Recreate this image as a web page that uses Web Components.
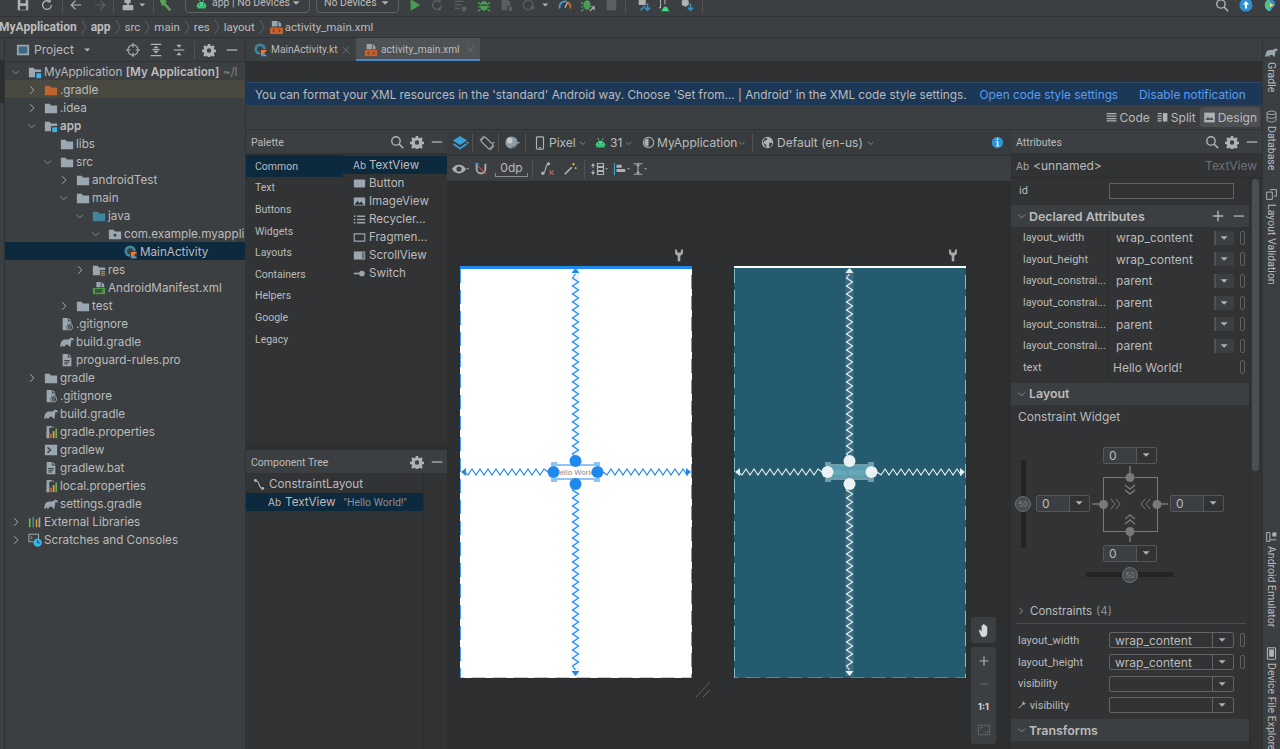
<!DOCTYPE html>
<html>
<head>
<meta charset="utf-8">
<style>
    html, body { margin: 0; padding: 0; background: #3c3f41; overflow: hidden; }
    body { font: 12px Inter, "Liberation Sans", sans-serif; color: #bbbbbb; width: 1280px; height: 749px; }
</style>
</head>
<body>
<ide-window></ide-window>
<script>
const GRAY = "#9aa7b0";
const FOLDER = (c) => `<path fill="${c}" d="M1 3h5.5L8 5h7v9H1z"/>`;
const FILE = `<path fill="${GRAY}" d="M3 1h6v4h4v10H3zM10 1l3 3h-3z"/>`;
const ELEPHANT = `<path fill="${GRAY}" d="M0 13c0-1 .6-1.6.8-3C1.200 7 3 5 6.500 5H9c2 0 2.500-2 4-2 1.500 0 2.700 1 2.700 2.300 0 .9-.8 1.200-1.500.8-.2-.6-.6-.9-1-.5-.7.6 0 3-1 4.400V13H10l-.3-2H6l-.5 2H3.200l-.2-2-1 2z"/>`;
const BARS = `<path fill="#c9642b" d="M7 10h2v5H7z"/><path fill="#e8a33d" d="M10 7h2v8h-2z"/><path fill="#62b543" d="M13 4h2v11h-2z"/>`;
const CARET = `<path fill="#afb1b3" d="M3 6h8l-4 4z"/>`;
const CHEV_DOWN = `<path fill="none" stroke="#8c8f91" stroke-width="1.300" d="M3 6l4.500 4.500L12 6"/>`;
const CHEV_RIGHT = `<path fill="none" stroke="#a7a9ab" stroke-width="1.300" d="M5.500 3l5 5-5 5"/>`;

const ICONS = {
    folder: FOLDER(GRAY),
    orange: FOLDER("#c0642f"),
    blue: FOLDER("#40859e"),
    module: FOLDER(GRAY) + `<path fill="#3c3f41" d="M8 8h8v8H8z"/><path fill="#3bb5ec" d="M9.500 9.500H15V15H9.500z"/>`,
    res: FOLDER(GRAY) + `<path fill="#3c3f41" d="M9 8h7v8H9z"/><path fill="#a5834a" d="M10 9h5v1.500h-5zM10 11h5v1.500h-5zM10 13h5v1.500h-5z"/>`,
    pkg: FOLDER(GRAY) + `<circle cx="8" cy="9.500" r="1.700" fill="#3c3f41"/>`,
    kotlin: `<circle cx="7" cy="7" r="6.500" fill="#40859e"/><circle cx="7" cy="7" r="3.400" fill="#3c3f41"/><path fill="#3c3f41" d="M7 7h8v9H7z"/><path fill="#f0772b" d="M8 8h7l-7 7z"/><path fill="#3aa0e8" d="M15 8v0L8 15h7l-3.500-3.500z"/>`,
    file: FILE + `<path fill="#3c3f41" d="M5 8h6v1H5zM5 10h6v1H5zM5 12h4v1H5z"/>`,
    git: FILE + `<circle cx="11.500" cy="11.500" r="4" fill="#3c3f41"/><circle cx="11.500" cy="11.500" r="3" fill="none" stroke="${GRAY}"/><path stroke="${GRAY}" d="M9.500 13.500l4-4"/>`,
    gradle: ELEPHANT,
    props: FILE + `<path fill="#3c3f41" d="M6 3h10v13H6z"/>` + BARS + `<path fill="${GRAY}" d="M3 8h3v7H3z"/>`,
    term: `<path fill="${GRAY}" d="M1 2h14v12H1z"/><path fill="none" stroke="#3c3f41" stroke-width="1.600" d="M4 5l3.500 3L4 11"/>`,
    xml: `<path fill="${GRAY}" d="M3 1h6v6H3zM10 1l3 3v3h-3z"/><path fill="#c9602b" d="M1 8h14v7H1z"/><path fill="none" stroke="#3c3f41" d="M6 10l-2 1.500L6 13M10 10l2 1.500-2 1.500"/>`,
    manifest: `<path fill="${GRAY}" d="M5 1h5v6H5zM11 1l3 3v3h-3z"/><path fill="#4f9b4a" d="M1 8h14v7H1z"/><text x="8" y="14" font-size="6" font-weight="700" text-anchor="middle" fill="#2b2b2b" font-family="Inter">MF</text>`,
    libs: `<path fill="#62b543" d="M1 4h2v10H1z"/><path fill="#40859e" d="M5 2h2v12H5z"/><path fill="#e8a33d" d="M9 5h1.500v9H9z"/><path fill="${GRAY}" d="M12 3h2v11h-2z"/>`,
    scratch: `<path fill="none" stroke="${GRAY}" stroke-width="1.200" d="M1 1.500h11V8M1 1.500V10h5"/><path fill="none" stroke="${GRAY}" d="M3 4l2 1.500L3 7"/><circle cx="11" cy="11" r="4.800" fill="#3bb5ec"/><path fill="none" stroke="#2b2b2b" d="M11 8v3.300h2.500"/>`,
    chevDown: CHEV_DOWN,
    chevRight: CHEV_RIGHT,
    caret: CARET,
    save: `<path fill="#afb1b3" d="M2 1h10l2 2v11H2zM5 2v4h6V2zM4.500 9v4.500h7V9z"/>`,
    sync: `<path fill="none" stroke="#afb1b3" stroke-width="1.500" d="M13 8a5 5 0 1 1-1.500-3.500M11.500 1.500v3h-3"/>`,
    back: `<path fill="none" stroke="#afb1b3" stroke-width="1.400" d="M14 8H2.500M7.500 3l-5 5 5 5"/>`,
    fwd: `<path fill="none" stroke="#5c5f61" stroke-width="1.400" d="M2 8h11.500M8.500 3l5 5-5 5"/>`,
    avd: `<path fill="#afb1b3" d="M4 1h7v5H9v2h5v6H2V8h5V6H4z"/>`,
    hammer: `<path fill="#5aa357" d="M2 3l4-3 4 4-1.500 1.500L15 13l-2 2-6.500-7L5 9.500z"/>`,
    android: `<path fill="#3ddc84" d="M2 12c0-3 2.500-6 6-6s6 3 6 6zM4 2.500l.8-.4L7 5.500l-.8.4zM12 2.500l-.8-.4L9 5.500l.8.4z"/><circle cx="5.500" cy="9.500" r=".8" fill="#3c3f41"/><circle cx="10.500" cy="9.500" r=".8" fill="#3c3f41"/><path fill="#3ddc84" d="M3 12.500h10V14H3z"/>`,
    play: `<path fill="#499c54" d="M3 1.500l11 6.500-11 6.500z"/>`,
    rerun: `<path fill="none" stroke="#5c5f61" stroke-width="1.500" d="M13 8a5 5 0 1 1-1.500-3.500M11.500 1.500v3h-3"/><path fill="#5c5f61" d="M7 14h6l-1-3z"/>`,
    dimlist: `<path fill="#5c5f61" d="M2 3h10v1.500H2zM2 7h8v1.500H2zM2 11h6v1.500H2zM10 10h5v5h-5z"/>`,
    bug: `<ellipse cx="8" cy="9" rx="4.500" ry="5.500" fill="#499c54"/><path stroke="#499c54" stroke-width="1.400" d="M1 5l3 2M15 5l-3 2M1 10h3M15 10h-3M1 15l3-2M15 15l-3-2"/><path fill="#3c3f41" d="M4 7.500h8V9H4z"/>`,
    dim1: `<path fill="#5c5f61" d="M3 1h6l4 4v4H9v5H3z"/><path fill="#5c5f61" d="M11 10h4v5h-4z"/>`,
    dim2: `<circle cx="7" cy="8" r="5.500" fill="none" stroke="#5c5f61" stroke-width="1.500"/><path fill="#5c5f61" d="M10 8l5 3-5 3z"/>`,
    gauge: `<path fill="none" stroke="#4a9fd8" stroke-width="2" d="M2 12a6.500 6.500 0 0 1 8-8"/><path fill="none" stroke="#c9642b" stroke-width="2" d="M11 5a6.500 6.500 0 0 1 3 7"/><path stroke="#afb1b3" stroke-width="1.500" d="M8 11l3-6"/>`,
    bugAttach: `<ellipse cx="7" cy="8" rx="4" ry="5.500" fill="#499c54"/><path stroke="#499c54" stroke-width="1.400" d="M0 5l3 2M0 10h3M0 15l3-2"/><path stroke="#afb1b3" stroke-width="1.400" d="M10 15l5-5M11 10h4v4"/>`,
    stop: `<path fill="#5c5f61" d="M3 2h11v12H3z"/>`,
    sdk: `<path fill="#afb1b3" d="M2 2h8v6H2z"/><path stroke="#3592c4" stroke-width="1.800" fill="none" d="M12 6v8M9 11l3 3 3-3M4 14l5-5"/>`,
    avd2: `<path fill="none" stroke="#afb1b3" stroke-width="1.200" d="M4 1v10H2.500M9 1v6"/><path fill="#3ddc84" d="M5 15l3-5h3l3 5z"/>`,
    cube: `<path fill="#afb1b3" d="M2 3l4-2 4 2v5l-4 2-4-2z"/><path stroke="#3592c4" stroke-width="1.800" fill="none" d="M12 6v8M9 11l3 3 3-3"/>`,
    search: `<circle cx="6.800" cy="6.800" r="4.800" fill="none" stroke="#afb1b3" stroke-width="1.600"/><path stroke="#afb1b3" stroke-width="1.800" d="M10.300 10.300L15 15"/>`,
    upload: `<circle cx="8" cy="8" r="7.500" fill="#2f8fd0"/><path fill="#fff" d="M8 3.500l3.500 4H9.200V12H6.800V7.500H4.500z"/>`,
    gem: `<path fill="#4fc08d" d="M2 8c0-4 3-7 6-7v14c-3 0-6-3-6-7z"/><path fill="#2f8fd0" d="M8 1c3 0 6 3 6 7l-6 7z"/><path fill="#ffd54a" d="M8 5l4 3-4 3z"/>`,
    panel: `<path fill="${GRAY}" d="M1 2h14v12H1z"/><path fill="#3c6a85" d="M3 4h10v8H3z"/>`,
    target: `<circle cx="8" cy="8" r="5.800" fill="none" stroke="#afb1b3" stroke-width="1.300"/><path stroke="#afb1b3" stroke-width="1.300" d="M8 0v5M8 11v5M0 8h5M11 8h5"/>`,
    expand: `<path stroke="#afb1b3" stroke-width="1.300" d="M2 1.500h12M2 14.500h12M4 7.500h8"/><path fill="#afb1b3" d="M5 6l3-3 3 3zM5 9l3 3 3-3z"/>`,
    collapse: `<path stroke="#afb1b3" stroke-width="1.300" d="M2 8h12"/><path fill="#afb1b3" d="M5 2l3 3.500L11 2zM5 14l3-3.500 3 3.500z"/>`,
    gear: `<path fill="#afb1b3" fill-rule="evenodd" d="M6.700 1h2.600l.4 2 1.400.6 1.700-1.100 1.800 1.800-1.100 1.700.6 1.400 2 .4v2.600l-2 .4-.6 1.400 1.100 1.700-1.800 1.800-1.700-1.100-1.400.6-.4 2H6.700l-.4-2-1.400-.6-1.700 1.100-1.800-1.800 1.100-1.700-.6-1.400-2-.4V7.800l2-.4.6-1.400-1.100-1.700 1.800-1.800 1.700 1.100 1.400-.6zM8 6a2.500 2.500 0 1 0 0 5 2.500 2.500 0 0 0 0-5z"/>`,
    minus: `<path fill="#afb1b3" d="M2 7.300h12v1.500H2z"/>`,
    plus: `<path fill="#afb1b3" d="M7.200 2h1.600v5.200H14v1.600H8.800V14H7.200V8.800H2V7.200h5.200z"/>`,
    close: `<path stroke="#6e7173" stroke-width="1.100" d="M3.500 3.500l9 9M12.500 3.500l-9 9"/>`,
    lines: `<path fill="#afb1b3" d="M2 2.500h12V4H2zM2 5.500h12V7H2zM2 8.500h12V10H2zM2 11.500h12V13H2z"/>`,
    split: `<path fill="#afb1b3" d="M2 2.500h5V4H2zM2 5.500h5V7H2zM2 8.500h5V10H2zM2 11.500h5V13H2zM8.500 2.500H14V13H8.500z"/>`,
    design: `<path fill="#afb1b3" d="M1.500 2h13v12h-13z"/><path fill="#4c5052" d="M3 11l3-4 2.500 2.500L10.500 7.500 13 11z"/>`,
    btn: `<rect x="1" y="3" width="14" height="10" rx="1.500" fill="${GRAY}"/>`,
    image: `<path fill="${GRAY}" d="M1 3h14v10H1z"/><path fill="#313335" d="M2 12l3.500-5 2.500 3 2-2 3.500 4z"/>`,
    list: `<path fill="${GRAY}" d="M1 3h2v2H1zM5 3h10v2H5zM1 7h2v2H1zM5 7h10v2H5zM1 11h2v2H1zM5 11h10v2H5z"/>`,
    frag: `<path fill="none" stroke="${GRAY}" stroke-width="1.400" d="M1.500 3.500h13v9h-13z"/>`,
    scroll: `<path fill="${GRAY}" d="M1 3h14v10H1z"/><path fill="#313335" d="M11 4h3v8h-3z" opacity=".5"/>`,
    switcher: `<path fill="${GRAY}" d="M1 7h7v2H1z"/><circle cx="11" cy="8" r="3.500" fill="${GRAY}"/>`,
    layers: `<path fill="#3aa0d8" d="M8 1l7 4.500L8 10 1 5.500z"/><path fill="none" stroke="#3aa0d8" stroke-width="1.800" d="M1.500 9L8 13.500 14.500 9"/>`,
    rotate: `<rect x="5" y="2" width="6" height="12" rx="1" fill="none" stroke="#afb1b3" stroke-width="1.100" transform="rotate(-45 8 8)"/><path fill="none" stroke="#afb1b3" stroke-width=".9" d="M1 5.500A7.500 7.500 0 0 1 5.500 1M15 10.500a7.500 7.500 0 0 1-4.500 4.500"/>`,
    ball: `<circle cx="8" cy="8" r="6.500" fill="#8f9da6"/><path fill="#5d6a73" d="M8 14.500a6.500 6.500 0 0 0 6.500-6.500c-1 3-4 5-6.500 4.500z"/><circle cx="6" cy="6" r="3" fill="#c3c8cb"/>`,
    phone: `<rect x="4" y="1" width="8" height="14" rx="1" fill="none" stroke="#afb1b3" stroke-width="1.300"/><path fill="#afb1b3" d="M7 12.500h2V14H7z"/>`,
    theme: `<circle cx="8" cy="8" r="6.500" fill="none" stroke="#afb1b3" stroke-width="1.300"/><path fill="#afb1b3" d="M8 3a5 5 0 0 0 0 10z"/>`,
    globe: `<circle cx="8" cy="8" r="7" fill="#afb1b3"/><path fill="#3c3f41" d="M5 2l3 1-1 2-3 1-1 3 3 1 1 4-2-1-2-4-1-2zM10 9l3-1 1 2-3 4-1-1z"/>`,
    info: `<circle cx="8" cy="8" r="7" fill="#2f94d6"/><path fill="#fff" d="M7 3h2v2H7zM6.500 6.500H9V11h1v1.500H6.500V11h1V8h-1z"/>`,
    eye: `<path fill="#afb1b3" fill-rule="evenodd" d="M0 8c2-3.500 5-5 8-5s6 1.500 8 5c-2 3.500-5 5-8 5s-6-1.500-8-5zm8-3a3 3 0 1 0 0 6 3 3 0 0 0 0-6z"/>`,
    magnet: `<path fill="none" stroke="#afb1b3" stroke-width="2" d="M3 2v6a5 5 0 0 0 10 0V2"/><path stroke="#db5860" stroke-width="1.200" d="M2 2l12 12"/><path fill="#3aa0d8" d="M2 1h3v3H2z"/>`,
    cons: `<path fill="none" stroke="#afb1b3" stroke-width="1.300" d="M3 13c4 0 2-10 6-10"/><circle cx="3" cy="13" r="1.800" fill="#afb1b3"/><circle cx="9" cy="3" r="1.800" fill="#afb1b3"/><path stroke="#db5860" stroke-width="1.300" d="M10 10l4.500 4.500M14.500 10L10 14.500"/>`,
    treeCons: `<path fill="none" stroke="#afb1b3" stroke-width="1.300" d="M3 3c6 0 3 10 9 10"/><circle cx="3" cy="3" r="1.800" fill="#afb1b3"/><circle cx="12" cy="13" r="1.800" fill="#afb1b3"/>`,
    wand: `<path stroke="#afb1b3" stroke-width="2" d="M2 14l8-8"/><path stroke="#e8c23d" stroke-width="1.100" d="M12 1v3M10.500 2.500h3M14.500 6v2M13.500 7h2"/>`,
    pack: `<path fill="none" stroke="#afb1b3" stroke-width="1.200" d="M7.500 2.500h6v3h-6zM7.500 6.500h6v3h-6zM7.500 10.500h6v3h-6z"/><path fill="#afb1b3" d="M1 5l2-3 2 3zM1 11l2 3 2-3zM2.500 5h1v2h-1zM2.500 9h1v2h-1z"/>`,
    align: `<path fill="#3aa0d8" d="M1 1h1.300v14H1z"/><path fill="#afb1b3" d="M4 3h6v3.500H4zM4 8h10v3.500H4z"/>`,
    baseline: `<path stroke="#afb1b3" stroke-width="1.300" d="M3 2h10M3 14h10M8 2v12"/><path fill="#afb1b3" d="M5.500 4.500h5l-2.500-2zM5.500 11.500h5l-2.500 2z"/>`,
    wrench: `<path fill="#a8aaac" d="M3.500 1v4c0 2 1.500 3.500 3 3.800V15h3V8.800c1.500-.3 3-1.800 3-3.800V1L10 2.500V5H6V2.500z"/>`,
    hand: `<path fill="#d5d7d9" d="M3 8l1-1 2 2V3c0-1 1.500-1 1.500 0v4V1.800c0-1 1.500-1 1.500 0V7V2.500c0-1 1.500-1 1.500 0V7V4c0-1 1.500-1 1.500 0v6c0 3-1.500 5-4 5H8c-1.500 0-2.500-1-3-2z"/>`,
    fit: `<path fill="none" stroke="#65686a" stroke-width="1.100" d="M1.500 2.500h13v11h-13z"/><path fill="none" stroke="#65686a" d="M4 7V5h3M12 9v2H9"/>`,
    wrenchSmall: `<path fill="#afb1b3" d="M1 14l7-7c-1-2 0-5 4-5l-2 2 2 2 2-2c0 4-3 5-5 4l-7 7z"/>`,
    device: `<rect x="3" y="1" width="10" height="14" rx="1" fill="none" stroke="#afb1b3" stroke-width="1.300"/><path fill="#afb1b3" d="M5 3h6v9H5z"/>`,
    db: `<ellipse cx="8" cy="3.500" rx="5.500" ry="2.200" fill="none" stroke="#afb1b3" stroke-width="1.100"/><path fill="none" stroke="#afb1b3" stroke-width="1.100" d="M2.500 3.500v9c0 1.200 2.500 2.200 5.500 2.200s5.500-1 5.500-2.200v-9M2.500 8c0 1.200 2.500 2.200 5.500 2.200s5.500-1 5.500-2.200"/>`,
    layoutVal: `<path fill="none" stroke="#afb1b3" stroke-width="1.200" d="M2 5h7v9H2zM6 2h8v8h-3"/>`,
    emu: `<path fill="none" stroke="#afb1b3" stroke-width="1.200" d="M2 3h4v11H2zM6 12h8"/><path fill="#afb1b3" d="M9 3h5v5H9z"/>`,
};

// small icon element, everything else reuses it
class IdeIcon extends HTMLElement {
    constructor() {
        super();
        this.attachShadow({ mode: "open" });
    }
    connectedCallback() {
        const size = this.getAttribute("size") || 16;
        this.shadowRoot.innerHTML = `
            <style>:host { display: inline-flex; flex: none; width: ${size}px; height: ${size}px; } svg { display: block; }</style>
            <svg width="${size}" height="${size}" viewBox="0 0 16 16">${ICONS[this.getAttribute("name")] || ""}</svg>`;
    }
}
customElements.define("ide-icon", IdeIcon);

const icon = (name, size) => `<ide-icon name="${name}" size="${size || 14}"></ide-icon>`;

// places items left to right, margins worked out from the wanted left edges
function strip(items) {
    let cursor = 0;
    return items.map(([x, w, html]) => {
        const m = x - cursor;
        cursor = x + w;
        return `<span class="it" style="margin-left:${m}px;width:${w}px">${html}</span>`;
    }).join("");
}
const sepAt = (x) => [x, 1, `<i class="sep"></i>`];
const ic = (c, name, size) => [c - (size || 14) / 2, size || 14, icon(name, size)];
const STRIP_CSS = `
    .it { display: flex; flex: none; align-items: center; white-space: nowrap; }
    .sep { display: block; width: 1px; height: 18px; background: #505356; }
`;
const NARROW = `Roboto, "Liberation Sans", sans-serif`;

class ToolBar extends HTMLElement {
    constructor() {
        super();
        this.attachShadow({ mode: "open" });
        const items = [
            ic(23, "save"), ic(47, "sync"), sepAt(62), ic(76, "back"), ic(100, "fwd"), sepAt(113),
            ic(128, "avd"), ic(143, "caret", 12), sepAt(153), ic(165, "hammer"),
            [185, 125, `<span class="cfg" style="width:125px">${icon("android", 13)}<span style="margin-left:4px">app | No Devices</span><ide-icon name="caret" size="14" style="margin-left:auto"></ide-icon></span>`],
            [316, 83, `<span class="cfg" style="width:83px;padding-left:7px">No Devices<ide-icon name="caret" size="14" style="margin-left:auto"></ide-icon></span>`],
            ic(415, "play"), ic(437, "rerun"), ic(460, "dimlist"), ic(484, "bug"), ic(506, "dim1"), ic(529, "dim2"),
            ic(546, "caret", 12), ic(565, "gauge"), ic(588, "bugAttach"), ic(611, "stop"), sepAt(625),
            ic(644, "sdk"), ic(664, "avd2"), ic(687, "cube"), sepAt(702),
            ic(1222, "search"), ic(1246, "upload"), ic(1270, "gem"),
        ];
        this.shadowRoot.innerHTML = `
            <style>
                :host { display: block; height: 16px; overflow: hidden; background: #3c3f41; border-bottom: 1px solid #323232; }
                .row { display: flex; align-items: center; height: 9px; font: 10.500px ${NARROW}; color: #bbb; }
                .cfg { display: flex; align-items: center; box-sizing: border-box; height: 20px; margin-top: -3px; padding: 0 5px 0 9px; border: 1px solid #5e6163; border-radius: 4px; line-height: 10px; }
                ${STRIP_CSS}
            </style>
            <div class="row">${strip(items)}</div>`;
    }
}
customElements.define("tool-bar", ToolBar);

class BreadCrumbs extends HTMLElement {
    constructor() {
        super();
        this.attachShadow({ mode: "open" });
        const parts = [["MyApplication", 1], ["app", 1], ["src"], ["main"], ["res"], ["layout"]];
        this.shadowRoot.innerHTML = `
            <style>
                :host { display: flex; align-items: center; height: 20px; background: #3c3f41; border-bottom: 1px solid #323232; font: 11.500px ${NARROW}; overflow: hidden; }
                b { font-weight: 700; font-size: 12px; }
                .c { width: 6px; height: 20px; margin: 0 4px; flex: none; }
                .row { display: flex; align-items: center; margin-left: -1px; white-space: nowrap; }
                svg { display: block; }
            </style>
            <div class="row">
                ${parts.map(([t, bold]) => `${bold ? `<b>${t}</b>` : `<span>${t}</span>`}<svg class="c" viewBox="0 0 6 20"><path fill="none" stroke="#5e6163" d="M1 3l4 7-4 7"/></svg>`).join("")}
                ${icon("xml", 15)}<span style="margin-left:1px">activity_main.xml</span>
            </div>`;
    }
}
customElements.define("bread-crumbs", BreadCrumbs);

class PaneHeader extends HTMLElement {
    constructor() {
        super();
        this.attachShadow({ mode: "open" });
        this.shadowRoot.innerHTML = `
            <style>
                :host { display: flex; align-items: center; height: 24px; flex: none; box-sizing: border-box; background: #3c3f41; border-bottom: 1px solid #323232; padding: 1px 3px 0 5px; font: 10.500px ${NARROW}; color: #bbb; }
                .t { flex: 1; }
                ::slotted(ide-icon) { margin-left: 6px; }
            </style>
            <div class="t"><slot></slot></div>
            <slot name="actions"></slot>`;
    }
}
customElements.define("pane-header", PaneHeader);

class TreeRow extends HTMLElement {
    constructor() {
        super();
        this.attachShadow({ mode: "open" });
    }
    connectedCallback() {
        const depth = +this.getAttribute("depth") || 0;
        const arrow = this.getAttribute("arrow");
        const arrowIcon = arrow ? icon(arrow === "open" ? "chevDown" : "chevRight", 12) : "";
        this.shadowRoot.innerHTML = `
            <style>
                :host { display: flex; align-items: center; height: 18px; box-sizing: border-box; padding-top: 1px; white-space: nowrap; font-size: 11.700px; color: #bbb; }
                :host([selected]) { background: #0d293e; }
                :host([mark]) { background: #4a4940; }
                .a { width: 12px; height: 12px; margin-left: ${5 + 16 * depth}px; margin-right: 6px; flex: none; }
                .i { margin-right: 2px; display: flex; }
            </style>
            <span class="a">${arrowIcon}</span>
            <span class="i">${icon(this.getAttribute("icon"), 14)}</span>
            <span><slot></slot></span>`;
    }
}
customElements.define("tree-row", TreeRow);

class ProjectPane extends HTMLElement {
    constructor() {
        super();
        this.attachShadow({ mode: "open" });
        const rows = [
            [0, "open", "module", `MyApplication <b>[My Application]</b> <span style="color:#7f8284">~/l</span>`],
            [1, "closed", "orange", ".gradle", "mark"],
            [1, "closed", "folder", ".idea"],
            [1, "open", "module", "<b>app</b>"],
            [2, "", "folder", "libs"],
            [2, "open", "folder", "src"],
            [3, "closed", "folder", "androidTest"],
            [3, "open", "folder", "main"],
            [4, "open", "blue", "java"],
            [5, "open", "pkg", "com.example.myappli"],
            [6, "", "kotlin", "MainActivity", "selected"],
            [4, "closed", "res", "res"],
            [4, "", "manifest", "AndroidManifest.xml"],
            [3, "closed", "folder", "test"],
            [2, "", "git", ".gitignore"],
            [2, "", "gradle", "build.gradle"],
            [2, "", "file", "proguard-rules.pro"],
            [1, "closed", "folder", "gradle"],
            [1, "", "git", ".gitignore"],
            [1, "", "gradle", "build.gradle"],
            [1, "", "props", "gradle.properties"],
            [1, "", "term", "gradlew"],
            [1, "", "file", "gradlew.bat"],
            [1, "", "props", "local.properties"],
            [1, "", "gradle", "settings.gradle"],
            [0, "closed", "libs", "External Libraries"],
            [0, "closed", "scratch", "Scratches and Consoles"],
        ];
        this.shadowRoot.innerHTML = `
            <style>
                :host { display: flex; flex-direction: column; width: 240px; flex: none; background: #3c3f41; overflow: hidden; }
                .head { display: flex; align-items: center; height: 24px; flex: none; box-sizing: border-box; border-bottom: 1px solid #323232; font-size: 12px; }
                .tree { flex: 1; overflow: hidden; }
                b { font-weight: 600; }
                ${STRIP_CSS}
            </style>
            <div class="head">${strip([
                ic(18, "panel"), [29, 40, `<span>Project</span>`], ic(83, "caret", 12),
                ic(128, "target"), ic(151, "expand"), ic(174, "collapse"), sepAt(189), ic(204, "gear"), ic(227, "minus"),
            ])}</div>
            <div class="tree">
                ${rows.map(([d, a, i, t, flag]) => `<tree-row depth="${d}" ${a ? `arrow="${a}"` : ""} icon="${i}" ${flag || ""}>${t}</tree-row>`).join("")}
            </div>`;
    }
}
customElements.define("project-pane", ProjectPane);

class EditorTab extends HTMLElement {
    constructor() {
        super();
        this.attachShadow({ mode: "open" });
    }
    connectedCallback() {
        this.shadowRoot.innerHTML = `
            <style>
                :host { display: flex; align-items: center; height: 100%; box-sizing: border-box; padding: 0 3px 0 8px; font: 10.200px ${NARROW}; color: #bbb; width: ${this.getAttribute("width")}px; }
                :host([active]) { background: #4e5254; border-bottom: 2px solid #4a88c7; padding-top: 2px; }
                .x { margin-left: auto; display: flex; margin-right: 1px; }
                .t { margin-left: 3px; white-space: nowrap; }
            </style>
            ${icon(this.getAttribute("icon"), 14)}<span class="t"><slot></slot></span><span class="x">${icon("close", 12)}</span>`;
    }
}
customElements.define("editor-tab", EditorTab);

class NoticeBar extends HTMLElement {
    constructor() {
        super();
        this.attachShadow({ mode: "open" });
        this.shadowRoot.innerHTML = `
            <style>
                :host { display: flex; align-items: center; height: 23px; flex: none; background: #1d3857; border-top: 1px solid #2d4a6b; box-sizing: border-box; padding: 1px 0 0 9px; font-size: 11.770px; color: #bbb; white-space: nowrap; }
                a { color: #589df6; font-size: 11.800px; }
            </style>
            <span><slot></slot></span>
            <a style="margin-left:13px">Open code style settings</a>
            <a style="margin-left:21px">Disable notification</a>`;
    }
}
customElements.define("notice-bar", NoticeBar);

class ModeBar extends HTMLElement {
    constructor() {
        super();
        this.attachShadow({ mode: "open" });
        this.shadowRoot.innerHTML = `
            <style>
                :host { display: flex; align-items: center; justify-content: flex-end; height: 25px; flex: none; background: #3c3f41; border-bottom: 1px solid #323232; box-sizing: border-box; padding-right: 2px; font-size: 12px; }
                span { display: flex; align-items: center; height: 20px; padding: 0 3px; gap: 2px; border-radius: 3px; }
                .on { background: #4c5052; margin-left: 1px; padding: 0 3px 0 3px; }
            </style>
            <span>${icon("lines", 13)}Code</span>
            <span>${icon("split", 13)}Split</span>
            <span class="on">${icon("design", 13)}Design</span>`;
    }
}
customElements.define("mode-bar", ModeBar);

class ListRow extends HTMLElement {
    constructor() {
        super();
        this.attachShadow({ mode: "open" });
    }
    connectedCallback() {
        const ic = this.getAttribute("icon");
        this.shadowRoot.innerHTML = `
            <style>
                :host { display: flex; align-items: center; white-space: nowrap; color: #bbb; box-sizing: border-box; }
                :host([selected]) { background: #0d293e; }
                :host([kind=cat]) { height: 21.600px; padding: 1px 0 0 9px; font: 10.500px ${NARROW}; }
                :host([kind=item]) { height: 18px; padding-left: 10px; font-size: 11.600px; gap: 3px; }
                .ab { width: 13px; font-size: 10px; }
            </style>
            ${ic === "ab" ? `<span class="ab">Ab</span>` : ic ? icon(ic, 13) : ""}<slot></slot>`;
    }
}
customElements.define("list-row", ListRow);

class PalettePane extends HTMLElement {
    constructor() {
        super();
        this.attachShadow({ mode: "open" });
        const cats = ["Common", "Text", "Buttons", "Widgets", "Layouts", "Containers", "Helpers", "Google", "Legacy"];
        const items = [["ab", "TextView"], ["btn", "Button"], ["image", "ImageView"], ["list", "Recycler..."], ["frag", "Fragmen..."], ["scroll", "ScrollView"], ["switcher", "Switch"]];
        const acts = (list) => list.map((n) => `<ide-icon slot="actions" name="${n}" size="14"></ide-icon>`).join("");
        this.shadowRoot.innerHTML = `
            <style>
                :host { display: flex; flex-direction: column; width: 201px; flex: none; background: #313335; overflow: hidden; }
                .lists { display: grid; grid-template-columns: 97px 1fr; height: 289px; flex: none; padding-top: 1px; box-sizing: border-box; }
                .items { padding-top: 1px; }
                .gap { height: 7px; flex: none; background: #2f3032; }
                .tree { flex: 1; width: 177px; border-right: 1px solid #2b2c2e; font-size: 11.700px; }
                .tr { display: flex; align-items: center; height: 18px; white-space: nowrap; padding-left: 7px; }
                .sel { background: #0d293e; padding-left: 22px; }
                .ab { font-size: 10px; width: 17px; }
                .hint { margin-left: 8px; font: 10.500px ${NARROW}; color: #8c8f91; }
            </style>
            <pane-header>Palette${acts(["search", "gear", "minus"])}</pane-header>
            <div class="lists">
                <div>${cats.map((c, i) => `<list-row kind="cat" ${i ? "" : "selected"}>${c}</list-row>`).join("")}</div>
                <div class="items">${items.map(([ic, t], i) => `<list-row kind="item" icon="${ic}" ${i ? "" : "selected"}>${t}</list-row>`).join("")}</div>
            </div>
            <div class="gap"></div>
            <pane-header>Component Tree${acts(["gear", "minus"])}</pane-header>
            <div class="tree">
                <div class="tr" style="margin-top:1px">${icon("treeCons", 13)}<span style="margin-left:3px">ConstraintLayout</span></div>
                <div class="tr sel"><span class="ab">Ab</span>TextView<span class="hint">"Hello World!"</span></div>
            </div>`;
    }
}
customElements.define("palette-pane", PalettePane);

class DesignBar extends HTMLElement {
    constructor() {
        super();
        this.attachShadow({ mode: "open" });
        const off = 447;
        const shift = (list) => list.map(([x, w, h]) => [x - off, w, h]);
        const row1 = shift([
            ic(460, "layers", 16), ic(468, "caret", 6), sepAt(472), ic(487, "rotate", 16), ic(494, "caret", 6), sepAt(498),
            ic(511, "ball", 15), ic(519, "caret", 6), sepAt(525), ic(540, "phone"),
            [549, 27, "Pixel"], ic(583, "chevDown", 10), ic(600, "android", 13), [610, 13, "31"], ic(629, "chevDown", 10),
            ic(648, "theme", 13), [657, 80, "MyApplication"], ic(742, "chevDown", 10), sepAt(752), ic(767, "globe", 13),
            [777, 85, "Default (en-us)"], ic(871, "chevDown", 10), ic(997, "info", 13),
        ]);
        const row2 = shift([
            ic(459, "eye", 14), ic(468, "caret", 6), ic(481, "magnet", 14),
            [495, 33, `<span class="dp">0dp</span>`], sepAt(532), ic(547, "cons", 15), ic(570, "wand", 14), sepAt(584),
            ic(598, "pack", 16), ic(607, "caret", 6), ic(620, "align", 14), ic(629, "caret", 6), ic(638, "baseline", 14), ic(646, "caret", 6),
        ]);
        this.shadowRoot.innerHTML = `
            <style>
                :host { display: block; flex: none; font-size: 12px; color: #bbb; }
                .r { display: flex; align-items: center; }
                .r1 { height: 26px; background: #383b3d; border-bottom: 1px solid #323232; box-sizing: border-box; }
                .r2 { height: 26px; background: #3c3f41; border-bottom: 1px solid #2b2c2e; box-sizing: border-box; }
                .dp { display: block; position: relative; width: 100%; text-align: center; border-bottom: 1px solid #8c8f91; height: 16px; line-height: 14px; box-sizing: border-box; }
                .dp::before, .dp::after { content: ""; position: absolute; bottom: 0; width: 1px; height: 3px; background: #8c8f91; }
                .dp::before { left: 0; }
                .dp::after { right: 0; }
                ${STRIP_CSS}
            </style>
            <div class="r r1">${strip(row1)}</div>
            <div class="r r2">${strip(row2)}</div>`;
    }
}
customElements.define("design-bar", DesignBar);

// zigzag line between two points, used for the constraint springs
function spring(x1, y1, x2, y2, amp, step) {
    const len = Math.hypot(x2 - x1, y2 - y1);
    const ux = (x2 - x1) / len, uy = (y2 - y1) / len;
    const pts = [`${x1},${y1}`];
    let side = 1;
    for (let d = step / 2; d < len; d += step / 2) {
        pts.push(`${x1 + ux * d - uy * amp * side},${y1 + uy * d + ux * amp * side}`);
        side = -side;
    }
    pts.push(`${x2},${y2}`);
    return `<polyline points="${pts.join(" ")}"/>`;
}

class BlueprintView extends HTMLElement {
    constructor() {
        super();
        this.attachShadow({ mode: "open" });
    }
    connectedCallback() {
        const dark = this.hasAttribute("dark");
        const line = dark ? "#e6eef0" : "#1e88f0";
        const bg = dark ? "#245b6f" : "#ffffff";
        const edge = dark ? "#7fbccb" : "#1e88f0";
        const band = dark ? "rgba(255,255,255,.12)" : "rgba(30,136,240,.08)";
        const knob = dark ? "#eaf2f4" : "#1e88f0";
        const cx = 115.500, cy = 206;
        this.shadowRoot.innerHTML = `
            <style>
                :host { display: block; width: 232px; flex: none; }
                .w { display: flex; justify-content: flex-end; height: 18px; padding-right: 6px; box-sizing: border-box; }
                svg.b { display: block; }
            </style>
            <div class="w">${icon("wrench", 14)}</div>
            <svg class="b" width="232" height="412" viewBox="0 0 232 412">
                <rect width="232" height="412" fill="${bg}"/>
                <path d="M.5 3V412H231.500V3" fill="none" stroke="${edge}" stroke-dasharray="14 7" stroke-opacity="${dark ? 1 : .8}"/>
                <rect width="232" height="${dark ? 2 : 3}" fill="${dark ? "#fff" : "#1e88f0"}"/>
                <rect x="${cx - 4}" y="3" width="8" height="190" fill="${band}"/>
                <rect x="${cx - 4}" y="220" width="8" height="190" fill="${band}"/>
                <g fill="none" stroke="${line}" stroke-width="1.200">
                    ${spring(cx, 8, cx, 192, 3, 8)}
                    ${spring(cx, 220, cx, 404, 3, 8)}
                    ${spring(4, cy, 88, cy, 3, 8)}
                    ${spring(143, cy, 228, cy, 3, 8)}
                </g>
                <g fill="${line}">
                    <path d="M${cx - 4} 7h8l-4-5zM${cx - 4} 405h8l-4 5zM6 ${cy - 4}v8l-5-4zM226 ${cy - 4}v8l5-4z"/>
                </g>
                ${dark ? `<rect x="93" y="${cy - 6}" width="45" height="12" fill="#5b9fb1"/>` : ""}
                <text x="${cx}" y="${cy + 3}" font-family="Roboto, sans-serif" font-size="8" text-anchor="middle" fill="${dark ? "#7db4c3" : "#8a8a8a"}">Hello World!</text>
                <path d="M91 ${cy - 7}h49M91 ${cy + 7}h49" stroke="${dark ? "#bfe0e8" : "#1e88f0"}" fill="none" stroke-width="1"/>
                <path d="M91 ${cy - 9}h6M134 ${cy - 9}h6M91 ${cy + 9}h6M134 ${cy + 9}h6" stroke="${dark ? "#bfe0e8" : "#1e88f0"}" fill="none" stroke-width="1"/>
                <g fill="${knob}">
                    <circle cx="${cx}" cy="${cy - 11}" r="6"/><circle cx="${cx}" cy="${cy + 12}" r="6"/>
                    <circle cx="${cx - 22}" cy="${cy}" r="6"/><circle cx="${cx + 22}" cy="${cy}" r="6"/>
                </g>
            </svg>`;
    }
}
customElements.define("blueprint-view", BlueprintView);

class ZoomControls extends HTMLElement {
    constructor() {
        super();
        this.attachShadow({ mode: "open" });
        this.shadowRoot.innerHTML = `
            <style>
                :host { position: absolute; left: 524px; top: 435px; width: 25px; display: flex; flex-direction: column; gap: 4px; font-size: 9px; font-weight: 700; color: #d5d7d9; }
                div { background: #3c3f41; border-radius: 3px; display: flex; flex-direction: column; align-items: center; }
                .h { height: 26px; justify-content: center; }
                .g { height: 97px; justify-content: space-around; padding: 2px 0; box-sizing: border-box; }
            </style>
            <div class="h">${icon("hand", 15)}</div>
            <div class="g">${icon("plus", 12)}<ide-icon name="minus" size="12" style="opacity:.35"></ide-icon><span>1:1</span>${icon("fit", 14)}</div>`;
    }
}
customElements.define("zoom-controls", ZoomControls);

class DesignCanvas extends HTMLElement {
    constructor() {
        super();
        this.attachShadow({ mode: "open" });
        this.shadowRoot.innerHTML = `
            <style>
                :host { display: flex; flex: 1; position: relative; gap: 42px; padding: 66px 0 0 13px; background: #2d2e30; overflow: hidden; align-items: flex-start; }
                .grip { position: absolute; left: 248px; top: 499px; }
            </style>
            <blueprint-view></blueprint-view>
            <blueprint-view dark></blueprint-view>
            <svg class="grip" width="16" height="16" viewBox="0 0 16 16"><path stroke="#5e6163" fill="none" d="M1 16L15 1M8 16l7-7"/></svg>
            <zoom-controls></zoom-controls>`;
    }
}
customElements.define("design-canvas", DesignCanvas);

class SectionHead extends HTMLElement {
    constructor() {
        super();
        this.attachShadow({ mode: "open" });
        this.shadowRoot.innerHTML = `
            <style>
                :host { display: flex; align-items: center; height: 22px; background: #3c3f41; font-size: 12.400px; font-weight: 600; padding: 0 3px 0 5px; color: #bbb; gap: 1px; }
                .t { flex: 1; }
                ::slotted(ide-icon) { margin-left: 6px; }
            </style>
            ${icon("chevDown", 12)}<span class="t"><slot></slot></span><slot name="actions"></slot>`;
    }
}
customElements.define("section-head", SectionHead);

class AttrRow extends HTMLElement {
    constructor() {
        super();
        this.attachShadow({ mode: "open" });
    }
    connectedCallback() {
        const box = this.hasAttribute("box");
        const noDrop = this.hasAttribute("plain");
        const pill = this.hasAttribute("pill");
        const drop = `<span class="drop"><svg width="14" height="14" viewBox="0 0 16 16">${CARET}</svg></span>`;
        this.shadowRoot.innerHTML = `
            <style>
                :host { display: grid; grid-template-columns: 96px 1fr 15px; align-items: center; height: 21.600px; font: 11px ${NARROW}; color: #bbb; }
                .n { padding-left: ${box ? 7 : 12}px; white-space: nowrap; overflow: hidden; }
                .v { display: flex; align-items: center; height: 100%; font: 12px Inter, sans-serif; box-sizing: border-box; }
                .declared { border-left: 1px solid #2b2c2e; padding-left: ${noDrop ? 5 : 8}px; justify-content: space-between; }
                .declared .drop { width: 18px; height: 14px; background: #3c3f41; border-left: 2px solid #505356; display: flex; justify-content: center; }
                .boxed { height: 16px; border: 1px solid #646464; border-radius: 2px; padding-left: 5px; margin-left: 2px; justify-content: space-between; }
                .boxed .drop { width: 20px; height: 14px; border-left: 1px solid #646464; display: flex; justify-content: center; }
                .p { width: 3px; height: 12px; border: 1px solid #5e6163; border-radius: 2px; justify-self: center; margin-left: 2px; }
                .n ide-icon { vertical-align: -2px; }
            </style>
            <span class="n"><slot name="name"></slot></span>
            <span class="v ${box ? "boxed" : "declared"}"><span><slot></slot></span>${noDrop ? "" : drop}</span>
            ${pill ? `<span class="p"></span>` : "<span></span>"}`;
    }
}
customElements.define("attr-row", AttrRow);

class NumField extends HTMLElement {
    constructor() {
        super();
        this.attachShadow({ mode: "open" });
        this.shadowRoot.innerHTML = `
            <style>
                :host { display: flex; position: absolute; width: 54px; height: 17px; box-sizing: border-box; border: 1px solid #55585a; border-radius: 2px; font-size: 12px; color: #bbb; }
                .n { flex: 1; background: #3c3f41; padding-left: 5px; line-height: 15px; }
                .d { width: 19px; border-left: 1px solid #55585a; display: flex; justify-content: center; align-items: center; }
            </style>
            <span class="n"><slot></slot></span>
            <span class="d"><svg width="14" height="14" viewBox="0 0 16 16">${CARET}</svg></span>`;
    }
}
customElements.define("num-field", NumField);

class ConstraintWidget extends HTMLElement {
    constructor() {
        super();
        this.attachShadow({ mode: "open" });
        this.shadowRoot.innerHTML = `
            <style>
                :host { display: block; position: relative; width: 238px; height: 173px; flex: none; }
                svg { position: absolute; left: 0; top: 1px; }
            </style>
            <svg width="238" height="165" viewBox="1011 427 238 165">
                <rect x="1021" y="460" width="5" height="88" fill="#232425"/>
                <rect x="1086" y="572" width="88" height="5" fill="#232425"/>
                <rect x="1103.500" y="477.500" width="54" height="54" fill="none" stroke="#77797b"/>
                <g stroke="#77797b" stroke-width="1.500" fill="none">
                    <path d="M1130 466v11M1130 531v11M1092 504h11M1157 504h11"/>
                    <path d="M1125 485l5 4 5-4M1125 490l5 4 5-4M1125 519l5-4 5 4M1125 524l5-4 5 4"/>
                    <path d="M1111 499l4 5-4 5M1116 499l4 5-4 5M1150 499l-4 5 4 5M1145 499l-4 5 4 5" stroke-width="1"/>
                </g>
                <g fill="#77797b">
                    <circle cx="1130" cy="477.500" r="4.500"/><circle cx="1130" cy="531.500" r="4.500"/>
                    <circle cx="1103.500" cy="504.500" r="4.500"/><circle cx="1157" cy="504.500" r="4.500"/>
                </g>
                <g fill="#4a4d4f" stroke="#6e7173">
                    <circle cx="1023" cy="504" r="7.500"/><circle cx="1130" cy="575" r="7.500"/>
                </g>
                <g font-family="Inter, sans-serif" font-size="7.500" fill="#7f8284" text-anchor="middle">
                    <text x="1023" y="507">50</text><text x="1130" y="578">50</text>
                </g>
            </svg>
            <num-field style="left:92px;top:21px">0</num-field>
            <num-field style="left:25px;top:69px">0</num-field>
            <num-field style="left:159px;top:69px">0</num-field>
            <num-field style="left:92px;top:119px">0</num-field>`;
    }
}
customElements.define("constraint-widget", ConstraintWidget);

class AttrPane extends HTMLElement {
    constructor() {
        super();
        this.attachShadow({ mode: "open" });
        const declared = [
            ["layout_width", "wrap_content"], ["layout_height", "wrap_content"],
            ["layout_constrai...", "parent"], ["layout_constrai...", "parent"],
            ["layout_constrai...", "parent"], ["layout_constrai...", "parent"],
        ];
        const acts = (list) => list.map((n) => `<ide-icon slot="actions" name="${n}" size="14"></ide-icon>`).join("");
        this.shadowRoot.innerHTML = `
            <style>
                :host { display: flex; flex-direction: column; width: 251px; flex: none; background: #313335; overflow: hidden; font-size: 12px; }
                .sub { display: flex; align-items: center; height: 24px; flex: none; padding: 0 5px; box-sizing: border-box; border-bottom: 1px solid #2b2c2e; }
                .ab { font-size: 10px; color: #a7a9ab; margin-right: 4px; }
                .cls { margin-left: auto; color: #6e7173; }
                .body { display: flex; flex: 1; min-height: 0; }
                .col { width: 238px; flex: none; }
                .gut { flex: 1; border-left: 1px solid #2b2c2e; padding: 1px 3px 0 2px; }
                .thumb { height: 292px; background: #4c4f51; border-radius: 4px; }
                .id { display: flex; align-items: center; height: 27px; padding: 0 0 2px 8px; box-sizing: border-box; font: 11px ${NARROW}; }
                .input { width: 125px; height: 16px; box-sizing: border-box; border: 1px solid #646464; margin-left: 82px; }
                .cw { padding: 4px 0 0 7px; height: 21px; box-sizing: border-box; }
                .more { display: flex; align-items: center; height: 25px; margin: 0 3px 0 5px; padding-top: 1px; gap: 4px; border-bottom: 1px solid #4a4d4f; box-sizing: border-box; font-size: 11.500px; }
                .more i { font-style: normal; color: #8c8f91; }
            </style>
            <pane-header>Attributes${acts(["search", "gear", "minus"])}</pane-header>
            <div class="sub"><span class="ab">Ab</span>&lt;unnamed&gt;<span class="cls">TextView</span></div>
            <div class="body">
                <div class="col">
                    <div class="id"><span style="width:8px">id</span><span class="input"></span></div>
                    <section-head>Declared Attributes${acts(["plus", "minus"])}</section-head>
                    ${declared.map(([n, v]) => `<attr-row pill><span slot="name">${n}</span>${v}</attr-row>`).join("")}
                    <attr-row plain pill><span slot="name">text</span>Hello World!</attr-row>
                    <div style="height:4.500px"></div>
                    <section-head>Layout</section-head>
                    <div class="cw">Constraint Widget</div>
                    <constraint-widget></constraint-widget>
                    <div class="more">${icon("chevRight", 10)}Constraints <i>(4)</i></div>
                    <div style="height:6px"></div>
                    <attr-row box pill><span slot="name">layout_width</span>wrap_content</attr-row>
                    <attr-row box pill><span slot="name">layout_height</span>wrap_content</attr-row>
                    <attr-row box><span slot="name">visibility</span></attr-row>
                    <attr-row box><span slot="name">${icon("wrenchSmall", 9)} visibility</span></attr-row>
                    <div style="height:3px"></div>
                    <section-head>Transforms</section-head>
                </div>
                <div class="gut"><div class="thumb"></div></div>
            </div>`;
    }
}
customElements.define("attr-pane", AttrPane);

class SideStrip extends HTMLElement {
    constructor() {
        super();
        this.attachShadow({ mode: "open" });
        const tools = [[8, "gradle", "Gradle", 30], [18, "db", "Database", 42], [20, "layoutVal", "Layout Validation", 77], [249, "emu", "Android Emulator", 78], [23, "device", "Device File Explorer", 87]];
        this.shadowRoot.innerHTML = `
            <style>
                :host { display: flex; flex-direction: column; align-items: center; width: 18px; flex: none; background: #3c3f41; font: 10.500px ${NARROW}; overflow: hidden; box-sizing: border-box; border-left: 1px solid #323232; }
                div { display: flex; flex-direction: column; align-items: center; flex: none; gap: 3px; }
                span { writing-mode: vertical-rl; white-space: nowrap; }
            </style>
            ${tools.map(([m, ic, t, h]) => `<div style="margin-top:${m}px">${icon(ic, 13)}<span style="height:${h}px">${t}</span></div>`).join("")}`;
    }
}
customElements.define("side-strip", SideStrip);

class IdeWindow extends HTMLElement {
    constructor() {
        super();
        this.attachShadow({ mode: "open" });
        this.shadowRoot.innerHTML = `
            <style>
                :host { display: flex; flex-direction: column; width: 1280px; height: 749px; overflow: hidden; background: #3c3f41; }
                .main { display: flex; flex: 1; min-height: 0; }
                .rail { width: 5px; flex: none; border-right: 1px solid #323232; box-sizing: border-box; position: relative; }
                .rail::before { content: ""; display: block; height: 43px; margin-top: 22px; background: #2b2d2f; }
                .editor { display: flex; flex-direction: column; width: 1017px; flex: none; border-left: 1px solid #323232; box-sizing: border-box; }
                .tabs { display: flex; height: 23px; flex: none; background: #3c3f41; }
                .band { height: 21px; flex: none; background: #2f3133; }
                .work { display: flex; flex: 1; min-height: 0; }
                .center { display: flex; flex-direction: column; width: 564px; flex: none; }
            </style>
            <tool-bar></tool-bar>
            <bread-crumbs></bread-crumbs>
            <div class="main">
                <div class="rail"></div>
                <project-pane></project-pane>
                <div class="editor">
                    <div class="tabs">
                        <editor-tab icon="kotlin" width="110">MainActivity.kt</editor-tab>
                        <editor-tab icon="xml" width="124" active>activity_main.xml</editor-tab>
                    </div>
                    <div class="band"></div>
                    <notice-bar>You can format your XML resources in the 'standard' Android way. Choose 'Set from... | Android' in the XML code style settings.</notice-bar>
                    <mode-bar></mode-bar>
                    <div class="work">
                        <palette-pane></palette-pane>
                        <div class="center">
                            <design-bar></design-bar>
                            <design-canvas></design-canvas>
                        </div>
                        <attr-pane></attr-pane>
                    </div>
                </div>
                <side-strip></side-strip>
            </div>`;
    }
}
customElements.define("ide-window", IdeWindow);
</script>
</body>
</html>
